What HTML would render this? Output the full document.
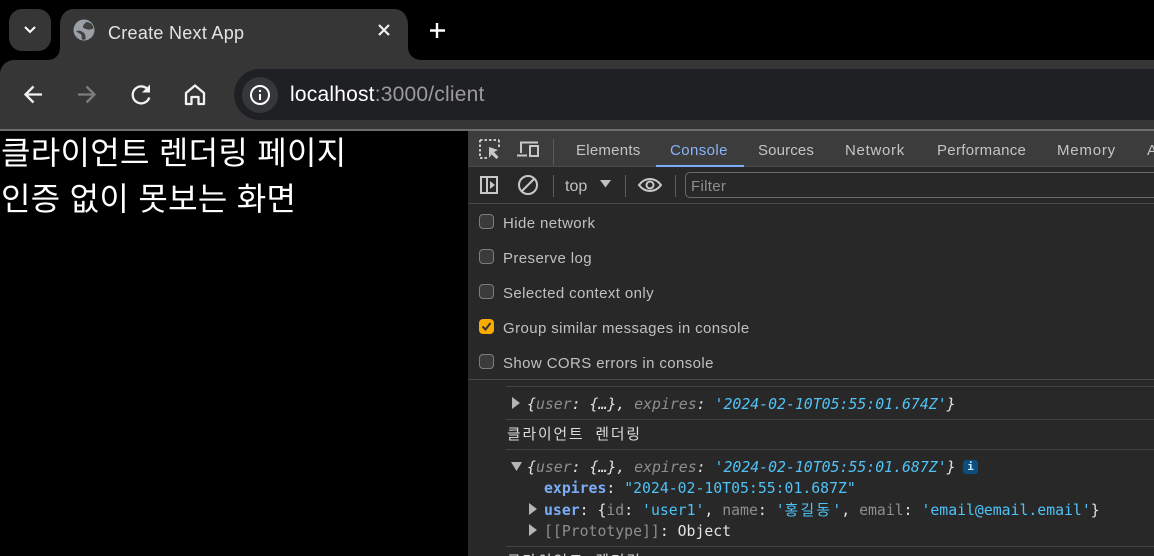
<!DOCTYPE html>
<html lang="ko"><head><meta charset="utf-8"><title>Create Next App</title>
<style>
html,body{margin:0;padding:0;width:1154px;height:556px;overflow:hidden;background:#000}
body{position:relative;font-family:"Liberation Sans","Noto Sans CJK KR",sans-serif}
.a{position:absolute;white-space:nowrap}
svg{position:absolute;overflow:visible}
.tab{font-size:15px;color:#c4c4c4;top:142px;line-height:18px}
.cb{position:absolute;left:479px;width:15px;height:15px;box-sizing:border-box;border:1.5px solid #7d7d7d;border-radius:4px;background:#3b3b3b}
.lb{left:503px;font-size:15px;color:#c0c0c0;line-height:20px;letter-spacing:.4px}
.m{font-family:"DejaVu Sans Mono","Noto Sans CJK KR",monospace;font-size:14.8px;line-height:18px;color:#e3e3e3}
.i{font-style:italic;font-size:14.84px}.g{color:#8e8e8e}.b{color:#4fc3f7}.w{color:#e3e3e3}.k{color:#7cacf8;font-weight:bold}
.h{height:1px;background:#424242}
</style></head><body>
<!-- top bar -->
<div class="a" style="left:9px;top:9px;width:42px;height:42px;border-radius:13px;background:#363636"></div>
<svg style="left:0;top:0" width="60" height="60"><path d="M25 27l5 5 5-5" fill="none" stroke="#fff" stroke-width="2"/></svg>
<div class="a" style="left:0;top:60px;width:1154px;height:70px;background:#363636;border-radius:14px 0 0 0"></div>
<svg style="left:0;top:0" width="460" height="62"><path d="M47 60C56 60 60 54 60 47V25C60 15 66 9 74 9H394C402 9 408 15 408 25V47C408 54 413 60 422 60V62H47Z" fill="#363636"/></svg>
<svg style="left:73px;top:19px" width="22" height="22" viewBox="0 0 22 22"><circle cx="11" cy="11" r="10.500" fill="#9aa0a6"/><path d="M3 12c3-1 6 0 8 2s1 4 2 6c-1 .5-3 .800-4 .500-1-2 .500-3.500-1-5s-3-1.500-5-3.500zM13 3c-1 2-3 2.500-3 4.500s3 2.500 5 3 4.500-.5 5.500-1.500c-.5-3-3-6-7.500-6z" fill="#363636" opacity=".9"/></svg>
<div class="a" style="left:108px;top:22px;font-size:18px;line-height:22px;color:#e3e3e3;letter-spacing:.28px">Create Next App</div>
<svg style="left:0;top:0" width="460" height="60"><path d="M379 25l10 10M389 25l-10 10" stroke="#f0f0f0" stroke-width="2.200" fill="none"/><path d="M437 23v15M430 30.500h15" stroke="#fff" stroke-width="2.400" fill="none"/></svg>
<!-- nav icons -->
<svg style="left:0;top:60px" width="240" height="70"><g fill="none" stroke-width="2.300"><path d="M42 34.500H26M33.500 26.500l-8 8 8 8" stroke="#f2f2f2"/><path d="M78 34.500h16M86.500 26.500l8 8-8 8" stroke="#7d7d7d"/><path d="M148.500 30.500a8.500 8.500 0 1 0 .8 7" stroke="#f2f2f2"/><path d="M150 24.500v8h-8z" fill="#f2f2f2" stroke="none"/><path d="M186 44V33l9-7.500 9 7.500v11h-5.500v-7h-7v7z" stroke="#f2f2f2" stroke-linejoin="round"/></g></svg>
<!-- omnibox -->
<div class="a" style="left:234px;top:69px;width:950px;height:51px;border-radius:26px;background:#1f2023"></div>
<div class="a" style="left:242px;top:77px;width:36px;height:36px;border-radius:18px;background:#36373a"></div>
<svg style="left:249px;top:84px" width="22" height="22" viewBox="0 0 22 22"><circle cx="11" cy="11" r="9" fill="none" stroke="#fff" stroke-width="2"/><path d="M11 10v6" stroke="#fff" stroke-width="2"/><circle cx="11" cy="7" r="1.200" fill="#fff"/></svg>
<div class="a" style="left:290px;top:82px;font-size:21px;line-height:26px;color:#9b9b9b;letter-spacing:.2px"><span style="color:#fff">localhost</span>:3000/client</div>
<div class="a" style="left:0;top:129px;width:1154px;height:2px;background:#6c6c6c"></div>
<!-- page -->
<div class="a" style="left:0;top:131px;width:468px;height:425px;background:#000"></div>
<div class="a" style="left:1px;top:130px;font-size:32px;line-height:46px;color:#fff;letter-spacing:.3px">클라이언트 렌더링 페이지</div>
<div class="a" style="left:1px;top:176px;font-size:32px;line-height:46px;color:#fff;letter-spacing:.3px">인증 없이 못보는 화면</div>
<!-- devtools -->
<div class="a" style="left:468px;top:131px;width:686px;height:425px;background:#282828"></div>
<div class="a" style="left:468px;top:131px;width:686px;height:35px;background:#3c3c3c"></div>
<div class="a" style="left:468px;top:166px;width:686px;height:1px;background:#4a4a4a"></div>
<svg style="left:468px;top:131px" width="110" height="70" fill="none" stroke="#c8c8c8"><path d="M12 9h19M12 9v18M31 9v9M12 27h8" stroke-width="2" stroke-dasharray="2.500 2"/><path d="M21 16v11l2.500-3.500 5 4.500 2-2-4.500-5 4-2z" fill="#c8c8c8" stroke="none"/><path d="M53 22V11.500h17M49 24.500h10" stroke-width="2"/><rect x="62" y="15" width="8" height="10" stroke-width="2"/><path d="M85.500 8v26" stroke="#5c5c5c"/><rect x="13" y="46" width="16" height="16" stroke-width="2"/><path d="M19 46v16" stroke-width="2"/><path d="M22 50l5 4-5 4z" fill="#c8c8c8" stroke="none"/><circle cx="60" cy="54" r="9" stroke-width="2"/><path d="M54 60l12-12" stroke-width="2"/><path d="M85.500 44v22" stroke="#5c5c5c"/></svg>
<div class="a tab" style="left:576px;letter-spacing:.25px">Elements</div>
<div class="a tab" style="left:670px;color:#8ab4f8;letter-spacing:.4px">Console</div>
<div class="a" style="left:656px;top:165px;width:88px;height:2px;background:#7cacf8"></div>
<div class="a tab" style="left:758px;letter-spacing:.15px">Sources</div>
<div class="a tab" style="left:845px;letter-spacing:.7px">Network</div>
<div class="a tab" style="left:937px;letter-spacing:.3px">Performance</div>
<div class="a tab" style="left:1057px;letter-spacing:.8px">Memory</div>
<div class="a tab" style="left:1147px">A</div>
<!-- filter bar -->
<div class="a" style="left:565px;top:178px;font-size:16px;line-height:18px;color:#c0c0c0">top</div>
<svg style="left:595px;top:175px" width="80" height="24"><path d="M5 5h11l-5.500 7.500z" fill="#c0c0c0"/><path d="M30.500 0v22M80.500 0v22" stroke="#5c5c5c"/><path d="M44 10c3-4 6.500-6 11-6s8 2 11 6c-3 4-6.500 6-11 6s-8-2-11-6z" fill="none" stroke="#c8c8c8" stroke-width="2"/><circle cx="55" cy="10" r="3.500" fill="none" stroke="#c8c8c8" stroke-width="2"/></svg>
<div class="a" style="left:685px;top:172px;width:480px;height:26px;box-sizing:border-box;border:1px solid #6a6a6a;border-radius:5px"></div>
<div class="a" style="left:691px;top:178px;font-size:15px;line-height:18px;color:#8f8f8f;letter-spacing:.3px">Filter</div>
<div class="a" style="left:468px;top:203px;width:686px;height:1px;background:#4a4a4a"></div>
<!-- settings -->
<div class="cb" style="top:214px"></div><div class="a lb" style="top:214px">Hide network</div>
<div class="cb" style="top:249px"></div><div class="a lb" style="top:249px">Preserve log</div>
<div class="cb" style="top:284px"></div><div class="a lb" style="top:284px">Selected context only</div>
<div class="cb" style="top:319px;background:#f9ab00;border-color:#f9ab00"></div>
<svg style="left:479px;top:319px" width="15" height="15"><path d="M3.500 7.500l3 3 5-6.500" fill="none" stroke="#333" stroke-width="2"/></svg>
<div class="a lb" style="top:319px">Group similar messages in console</div>
<div class="cb" style="top:354px"></div><div class="a lb" style="top:354px">Show CORS errors in console</div>
<div class="a" style="left:468px;top:379px;width:686px;height:1px;background:#4a4a4a"></div>
<!-- console -->
<div class="a h" style="left:506px;top:386px;width:648px"></div>
<div class="a h" style="left:506px;top:419px;width:648px"></div>
<div class="a h" style="left:506px;top:449px;width:648px"></div>
<div class="a h" style="left:506px;top:546px;width:648px"></div>
<svg style="left:505px;top:390px" width="40" height="150" fill="#b5b5b5"><path d="M7 7l8 6-8 6z"/><path d="M6 72h11l-5.500 9z"/><path d="M24 113l8 6-8 6zM24 134l8 6-8 6z"/></svg>
<div class="a m i g" style="left:527px;top:396px"><span class="w">{</span>user<span class="w">: {…},</span> expires<span class="w">:</span> <span class="b">'2024-02-10T05:55:01.674Z'</span><span class="w">}</span></div>
<div class="a m" style="left:507px;top:426px;color:#dcdcdc;letter-spacing:1.900px">클라이언트 렌더링</div>
<div class="a m i g" style="left:527px;top:459px"><span class="w">{</span>user<span class="w">: {…},</span> expires<span class="w">:</span> <span class="b">'2024-02-10T05:55:01.687Z'</span><span class="w">}</span></div>
<div class="a" style="left:963px;top:460px;width:15px;height:14px;border-radius:3px;background:#0b4f80"></div>
<div class="a" style="left:963px;top:460px;width:15px;height:14px;font:bold 11px/14px 'DejaVu Sans Mono',monospace;color:#cfe8fa;text-align:center">i</div>
<div class="a m" style="left:544px;top:480px"><span class="k">expires</span>: <span class="b">"2024-02-10T05:55:01.687Z"</span></div>
<div class="a m" style="left:544px;top:502px"><span class="k">user</span>: {<span class="g">id</span>: <span class="b">'user1'</span>, <span class="g">name</span>: <span class="b">'<span style="letter-spacing:2.300px">홍길동</span>'</span>, <span class="g">email</span>: <span class="b">'email@email.email'</span>}</div>
<div class="a m" style="left:544px;top:523px"><span class="g">[[Prototype]]</span>: Object</div>
<div class="a m" style="left:507px;top:553px;color:#dcdcdc;letter-spacing:1.900px">클라이언트 렌더링</div>
</body></html>
